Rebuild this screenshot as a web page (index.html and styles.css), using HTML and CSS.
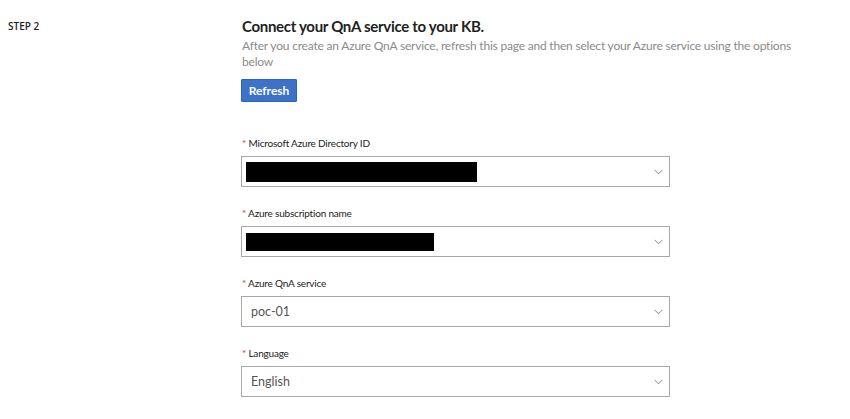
FILE: index.html
```html
<!DOCTYPE html>
<html>
<head>
<meta charset="utf-8">
<link rel="stylesheet" href="styles.css">
</head>
<body>
<div class="page">
  <div class="step">STEP 2</div>
  <div class="content">
    <h2 class="title">Connect your QnA service to your KB.</h2>
    <p class="desc">After you create an Azure QnA service, refresh this page and then select your Azure service using the options below</p>
    <button class="btn">Refresh</button>

    <div class="fields">
      <div class="field">
        <div class="label"><span class="req">*</span> Microsoft Azure Directory ID</div>
        <div class="select">
          <span class="redact redact-1"></span>
          <svg class="chev" width="9" height="6" viewBox="0 0 9 6"><path d="M0.5 0.8 L4.5 4.8 L8.5 0.8" fill="none" stroke="#8a8a8a" stroke-width="1"/></svg>
        </div>
      </div>
      <div class="field">
        <div class="label"><span class="req">*</span> Azure subscription name</div>
        <div class="select">
          <span class="redact redact-2"></span>
          <svg class="chev" width="9" height="6" viewBox="0 0 9 6"><path d="M0.5 0.8 L4.5 4.8 L8.5 0.8" fill="none" stroke="#8a8a8a" stroke-width="1"/></svg>
        </div>
      </div>
      <div class="field">
        <div class="label"><span class="req">*</span> Azure QnA service</div>
        <div class="select">
          <span class="value">poc-01</span>
          <svg class="chev" width="9" height="6" viewBox="0 0 9 6"><path d="M0.5 0.8 L4.5 4.8 L8.5 0.8" fill="none" stroke="#8a8a8a" stroke-width="1"/></svg>
        </div>
      </div>
      <div class="field">
        <div class="label"><span class="req">*</span> Language</div>
        <div class="select">
          <span class="value">English</span>
          <svg class="chev" width="9" height="6" viewBox="0 0 9 6"><path d="M0.5 0.8 L4.5 4.8 L8.5 0.8" fill="none" stroke="#8a8a8a" stroke-width="1"/></svg>
        </div>
      </div>
    </div>
  </div>
</div>
</body>
</html>
```
FILE: styles.css
```css
html, body {
  margin: 0;
  padding: 0;
  background: #ffffff;
  font-family: Lato, "Open Sans", sans-serif;
  color: #222;
}
.page {
  display: flex;
  padding-top: 16px;
}
.step {
  width: 234px;
  padding-left: 8px;
  font-family: "Open Sans", sans-serif;
  font-size: 10px;
  font-weight: 600;
  line-height: 20px;
  color: #222;
  flex: none;
}
.content {
  width: 428px;
  flex: none;
}
.title {
  margin: 0;
  font-size: 15px;
  font-weight: 700;
  letter-spacing: -0.3px;
  line-height: 20px;
  color: #222;
}
.desc {
  margin: 0;
  font-size: 12px;
  letter-spacing: -0.2px;
  line-height: 16px;
  color: #8a8a8a;
  width: 560px;
  padding-top: 2px;
}
.btn {
  margin-top: 9px;
  display: block;
  width: 56px;
  height: 23px;
  margin-left: -1px;
  padding: 0;
  background: #3c73c9;
  border: 1px solid #2f63b3;
  border-radius: 1px;
  color: #fff;
  font-family: Lato, "Open Sans", sans-serif;
  font-size: 12px;
  font-weight: 700;
}
.fields {
  margin-top: 33px;
  display: flex;
  flex-direction: column;
  gap: 18px;
}
.field {
  display: flex;
  flex-direction: column;
  gap: 5px;
}
.label {
  font-size: 10px;
  letter-spacing: -0.2px;
  line-height: 16px;
  color: #222;
}
.req {
  color: #d13438;
}
.select {
  margin-left: -1px;
  height: 31px;
  box-sizing: border-box;
  border: 1px solid #a8a8a8;
  display: flex;
  align-items: center;
  padding-left: 4px;
  padding-right: 6px;
}
.value {
  padding-left: 5px;
  font-size: 12.5px;
  color: #555;
  flex: 1;
}
.redact {
  display: block;
  background: #000;
  height: 20px;
}
.redact-1 { width: 231px; }
.redact-2 { width: 188px; height: 18px; }
.chev {
  margin-left: auto;
  flex: none;
}
```
